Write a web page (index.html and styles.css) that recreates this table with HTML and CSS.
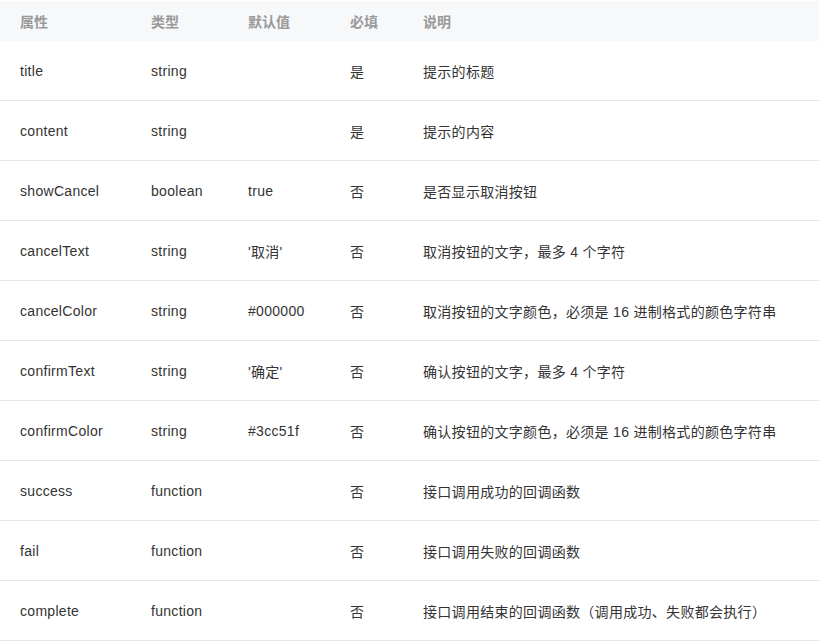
FILE: index.html
```html
<!DOCTYPE html>
<html lang="zh-CN">
<head>
<meta charset="utf-8">
<title>属性表</title>
<link rel="stylesheet" href="styles.css">
</head>
<body>
<div class="wrap">
<table class="props">
  <colgroup>
    <col class="c1"><col class="c2"><col class="c3"><col class="c4"><col class="c5">
  </colgroup>
  <thead>
    <tr><th>属性</th><th>类型</th><th>默认值</th><th>必填</th><th>说明</th></tr>
  </thead>
  <tbody>
    <tr><td>title</td><td>string</td><td></td><td>是</td><td>提示的标题</td></tr>
    <tr><td>content</td><td>string</td><td></td><td>是</td><td>提示的内容</td></tr>
    <tr><td>showCancel</td><td>boolean</td><td>true</td><td>否</td><td>是否显示取消按钮</td></tr>
    <tr><td>cancelText</td><td>string</td><td>'取消'</td><td>否</td><td>取消按钮的文字，最多 4 个字符</td></tr>
    <tr><td>cancelColor</td><td>string</td><td>#000000</td><td>否</td><td>取消按钮的文字颜色，必须是 16 进制格式的颜色字符串</td></tr>
    <tr><td>confirmText</td><td>string</td><td>'确定'</td><td>否</td><td>确认按钮的文字，最多 4 个字符</td></tr>
    <tr><td>confirmColor</td><td>string</td><td>#3cc51f</td><td>否</td><td>确认按钮的文字颜色，必须是 16 进制格式的颜色字符串</td></tr>
    <tr><td>success</td><td>function</td><td></td><td>否</td><td>接口调用成功的回调函数</td></tr>
    <tr><td>fail</td><td>function</td><td></td><td>否</td><td>接口调用失败的回调函数</td></tr>
    <tr><td>complete</td><td>function</td><td></td><td>否</td><td>接口调用结束的回调函数（调用成功、失败都会执行）</td></tr>
  </tbody>
</table>
</div>
</body>
</html>
```

FILE: styles.css
```css
html, body {
  margin: 0;
  padding: 0;
  background: #ffffff;
}
.wrap {
  padding-top: 1px;
  width: 819px;
}
.props {
  width: 819px;
  border-collapse: collapse;
  table-layout: fixed;
  font-family: "Liberation Sans", "Noto Sans CJK SC", sans-serif;
  font-size: 14px;
  color: #333333;
}
.c1 { width: 131px; }
.c2 { width: 97px; }
.c3 { width: 102px; }
.c4 { width: 73px; }
.c5 { width: 416px; }
.props th {
  height: 40px;
  padding: 0 0 0 20px;
  text-align: left;
  font-weight: 600;
  color: #999999;
  background: #f7f8fa;
  vertical-align: middle;
}
.props td {
  height: 59px;
  padding: 0 0 0 20px;
  border-bottom: 1px solid #e5e6e9;
  vertical-align: middle;
  white-space: nowrap;
  letter-spacing: 0.3px;
}
```
